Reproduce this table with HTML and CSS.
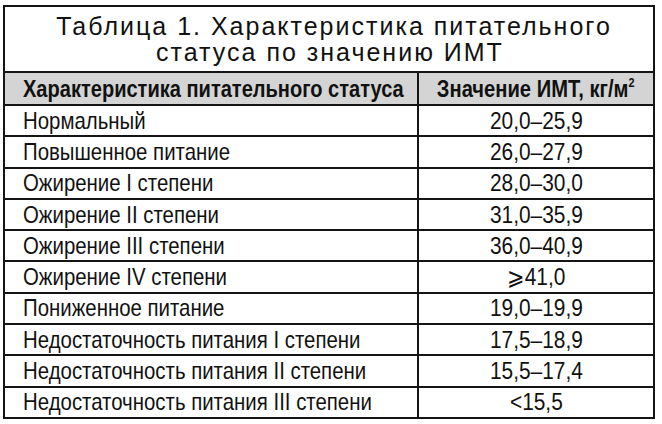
FILE: index.html
```html
<!DOCTYPE html>
<html lang="ru">
<head>
<meta charset="utf-8">
<link rel="stylesheet" href="styles.css">
</head>
<body>
<div class="page">
  <table class="bmi">
    <colgroup><col class="col1"><col class="col2"></colgroup>
    <thead>
      <tr><th class="title" colspan="2"><span class="l1">Таблица 1. Характеристика питательного</span><span class="l2">статуса по значению ИМТ</span></th></tr>
      <tr class="head">
        <th class="c1"><div class="cell"><span class="t">Характеристика питательного статуса</span></div></th>
        <th class="c2"><div class="cell"><span class="t">Значение ИМТ, кг/м<sup>2</sup></span></div></th>
      </tr>
    </thead>
    <tbody>
      <tr><td class="c1"><div class="cell"><span class="t">Нормальный</span></div></td><td class="c2"><div class="cell"><span class="t">20,0–25,9</span></div></td></tr>
      <tr><td class="c1"><div class="cell"><span class="t">Повышенное питание</span></div></td><td class="c2"><div class="cell"><span class="t">26,0–27,9</span></div></td></tr>
      <tr><td class="c1"><div class="cell"><span class="t">Ожирение I степени</span></div></td><td class="c2"><div class="cell"><span class="t">28,0–30,0</span></div></td></tr>
      <tr><td class="c1"><div class="cell"><span class="t">Ожирение II степени</span></div></td><td class="c2"><div class="cell"><span class="t">31,0–35,9</span></div></td></tr>
      <tr><td class="c1"><div class="cell"><span class="t">Ожирение III степени</span></div></td><td class="c2"><div class="cell"><span class="t">36,0–40,9</span></div></td></tr>
      <tr><td class="c1"><div class="cell"><span class="t">Ожирение IV степени</span></div></td><td class="c2"><div class="cell"><span class="t">⩾41,0</span></div></td></tr>
      <tr><td class="c1"><div class="cell"><span class="t">Пониженное питание</span></div></td><td class="c2"><div class="cell"><span class="t">19,0–19,9</span></div></td></tr>
      <tr><td class="c1"><div class="cell"><span class="t">Недостаточность питания I степени</span></div></td><td class="c2"><div class="cell"><span class="t">17,5–18,9</span></div></td></tr>
      <tr><td class="c1"><div class="cell"><span class="t">Недостаточность питания II степени</span></div></td><td class="c2"><div class="cell"><span class="t">15,5–17,4</span></div></td></tr>
      <tr><td class="c1"><div class="cell"><span class="t">Недостаточность питания III степени</span></div></td><td class="c2"><div class="cell"><span class="t">&lt;15,5</span></div></td></tr>
    </tbody>
  </table>
</div>
</body>
</html>
```
FILE: styles.css
```css
html, body {
  margin: 0;
  padding: 0;
  background: #ffffff;
}
.page {
  padding: 5px 0 0 3px;
}
.bmi {
  border-collapse: collapse;
  table-layout: fixed;
  width: 652px;
  color: #111111;
  font-family: "Liberation Sans", Arial, sans-serif;
}
.col1 { width: 414px; }
.bmi th, .bmi td {
  border: 2px solid #151515;
  padding: 0;
  white-space: nowrap;
}
.cell {
  display: flex;
  align-items: center;
  justify-content: flex-start;
}
.c2 .cell { justify-content: center; }
.t {
  display: inline-block;
  flex: none;
  white-space: nowrap;
}
.title {
  height: 64px;
  font-weight: normal;
  font-size: 25px;
  letter-spacing: 2px;
  line-height: 26px;
  text-align: center;
  background: #ffffff;
}
.title .l1, .title .l2 { display: block; }
.title .l1 { padding-left: 10px; }
.title .l2 { padding-left: 2px; }
.head th {
  background: #d4d4d4;
  height: 31px;
  font-size: 24px;
  font-weight: bold;
  line-height: 24px;
}
.head .c1 .cell { padding-left: 18px; }
.head .c1 .t { transform: scaleX(0.835); transform-origin: left center; }
.head .c2 .t { transform: scaleX(0.84); transform-origin: center center; }
.head sup { font-size: 13px; vertical-align: 10px; line-height: 0; }
.bmi td {
  height: 29.3px;
  font-size: 24px;
  line-height: 24px;
}
.bmi td.c1 .cell { padding-left: 18px; }
.bmi td.c1 .t { transform: scaleX(0.85); transform-origin: left center; }
.bmi td.c2 .t { transform: scaleX(0.87); transform-origin: center center; }
```
